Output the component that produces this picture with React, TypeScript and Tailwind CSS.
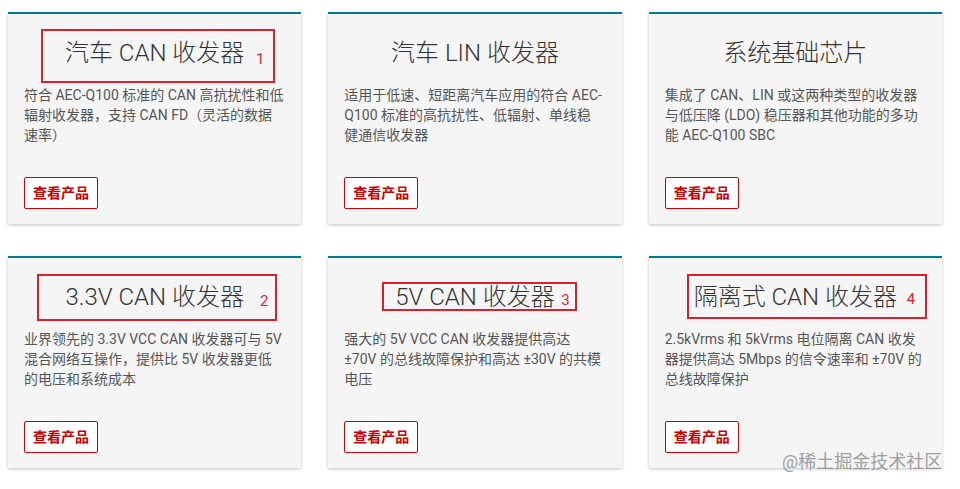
import React from "react";

type Mark = { n: string; box: string; num: string };
type Card = { title: string; desc: React.ReactNode; mark?: Mark };

const cards: Card[] = [
  {
    title: "汽车 CAN 收发器",
    desc: "符合 AEC-Q100 标准的 CAN 高抗扰性和低辐射收发器，支持 CAN FD（灵活的数据速率）",
    mark: { n: "1", box: "left-[33px] top-[15px] w-[234px] h-[54px]", num: "left-[248px] top-[35px]" },
  },
  {
    title: "汽车 LIN 收发器",
    desc: (
      <>
        适用于低速、短距离汽车应用的符合 AEC-Q100 标准的高抗扰性、低辐射、单线稳
        <br />
        健通信收发器
      </>
    ),
  },
  {
    title: "系统基础芯片",
    desc: "集成了 CAN、LIN 或这两种类型的收发器与低压降 (LDO) 稳压器和其他功能的多功能 AEC-Q100 SBC",
  },
  {
    title: "3.3V CAN 收发器",
    desc: "业界领先的 3.3V VCC CAN 收发器可与 5V 混合网络互操作，提供比 5V 收发器更低的电压和系统成本",
    mark: { n: "2", box: "left-[29px] top-[16px] w-[240px] h-[47px]", num: "left-[252px] top-[33px]" },
  },
  {
    title: "5V CAN 收发器",
    desc: "强大的 5V VCC CAN 收发器提供高达 ±70V 的总线故障保护和高达 ±30V 的共模电压",
    mark: { n: "3", box: "left-[54px] top-[24px] w-[195px] h-[29px]", num: "left-[233px] top-[32px]" },
  },
  {
    title: "隔离式 CAN 收发器",
    desc: "2.5kVrms 和 5kVrms 电位隔离 CAN 收发器提供高达 5Mbps 的信令速率和 ±70V 的总线故障保护",
    mark: { n: "4", box: "left-[38px] top-[16px] w-[240px] h-[45px]", num: "left-[258px] top-[31px]" },
  },
];

export default function App() {
  return (
    <div
      className="relative w-[960px] h-[489px] bg-white overflow-hidden"
      style={{ fontFamily: 'Roboto, "Noto Sans CJK SC", sans-serif' }}
    >
      <div className="ml-[8px] pt-[12px] w-[934px] grid grid-cols-3 gap-x-[27px] gap-y-[32px]">
        {cards.map((c, i) => (
          <div
            key={i}
            className="relative h-[212px] flex flex-col border-t-2 border-[#007c8a] bg-[#f5f5f5] px-4 pt-[23px] pb-[15px] shadow-[0_1px_3px_rgba(0,0,0,0.25)]"
          >
            <h3 className="h-[32px] text-center text-[24px] leading-[32px] font-light text-[#333] whitespace-nowrap">
              {c.title}
            </h3>
            <p className="mt-[16px] text-[14px] leading-[20px] text-[#555]">{c.desc}</p>
            <div className="mt-auto">
              <button className="h-[32px] w-[74px] border border-[#cc0000] rounded-[2px] bg-white text-[14px] font-bold text-[#cc0000]">
                查看产品
              </button>
            </div>
            {c.mark && (
              <>
                <div className={`absolute border-2 border-[#d9202c] ${c.mark.box}`} />
                <span className={`absolute text-[15px] leading-[20px] text-[#e0242f] ${c.mark.num}`}>
                  {c.mark.n}
                </span>
              </>
            )}
          </div>
        ))}
      </div>
      <div className="absolute left-[782px] top-[450px] text-[18px] leading-[24px] text-[#8a8a8a] opacity-80 whitespace-nowrap">
        @稀土掘金技术社区
      </div>
    </div>
  );
}
